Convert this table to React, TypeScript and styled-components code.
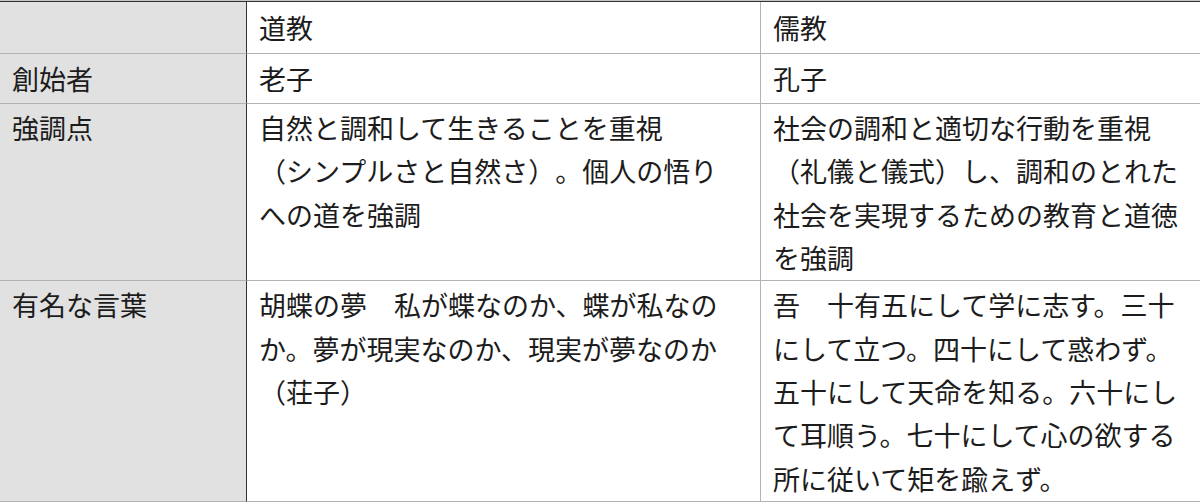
import styled, { createGlobalStyle } from 'styled-components'

const GlobalStyle = createGlobalStyle`
  html, body {
    margin: 0;
    padding: 0;
    background: #ffffff;
  }
  body {
    font-family: 'Noto Sans CJK JP', 'Noto Sans', sans-serif;
    color: #1c1c1c;
  }
`;

type RowData = {
  label: string;
  taoism: React.ReactNode;
  confucianism: React.ReactNode;
};

const rows: RowData[] = [
  { label: '創始者', taoism: '老子', confucianism: '孔子' },
  {
    label: '強調点',
    taoism: (
      <>
        自然と調和して生きることを重視
        <br />
        （シンプルさと自然さ）。個人の悟りへの道を強調
      </>
    ),
    confucianism: '社会の調和と適切な行動を重視（礼儀と儀式）し、調和のとれた社会を実現するための教育と道徳を強調',
  },
  {
    label: '有名な言葉',
    taoism: '胡蝶の夢　私が蝶なのか、蝶が私なのか。夢が現実なのか、現実が夢なのか（荘子）',
    confucianism: '吾　十有五にして学に志す。三十にして立つ。四十にして惑わず。五十にして天命を知る。六十にして耳順う。七十にして心の欲する所に従いて矩を踰えず。',
  },
];

export default function App() {
  return (
    <>
      <GlobalStyle />
      <Frame>
        <Table>
          <tbody>
            <Row $height={52} $middle>
              <LabelCell $width={247} />
              <Cell $width={514}>道教</Cell>
              <Cell $width={439} $last>
                儒教
              </Cell>
            </Row>
            {rows.map((row, i) => (
              <Row key={row.label} $height={i === 0 ? 50 : undefined} $middle={i === 0}>
                <LabelCell>{row.label}</LabelCell>
                <Cell>{row.taoism}</Cell>
                <Cell $last>{row.confucianism}</Cell>
              </Row>
            ))}
          </tbody>
        </Table>
      </Frame>
    </>
  );
}

const Frame = styled.div`
  width: 1200px;
  border-top: 1px solid #c4c4c4;
`;

const Table = styled.table`
  width: 1200px;
  table-layout: fixed;
  border-collapse: separate;
  border-spacing: 0;
  border-top: 1px solid #333333;
  font-size: 27px;
  line-height: 43.33px;
  text-spacing-trim: space-all;
`;

const Row = styled.tr<{ $height?: number; $middle?: boolean }>`
  height: ${(p) => (p.$height ? `${p.$height}px` : 'auto')};

  td {
    vertical-align: ${(p) => (p.$middle ? 'middle' : 'top')};
  }
`;

const Cell = styled.td<{ $width?: number; $last?: boolean }>`
  box-sizing: border-box;
  width: ${(p) => (p.$width ? `${p.$width}px` : 'auto')};
  padding: 2px 18px 1px 12px;
  border-bottom: 1px solid #b3b3b3;
  border-right: ${(p) => (p.$last ? 'none' : '1px solid #b3b3b3')};
  background: #ffffff;
  word-break: normal;
  line-break: strict;
  text-spacing-trim: space-all;
`;

const LabelCell = styled(Cell)`
  background: #e1e1e1;
  border-right: 1px solid #333333;
`;
